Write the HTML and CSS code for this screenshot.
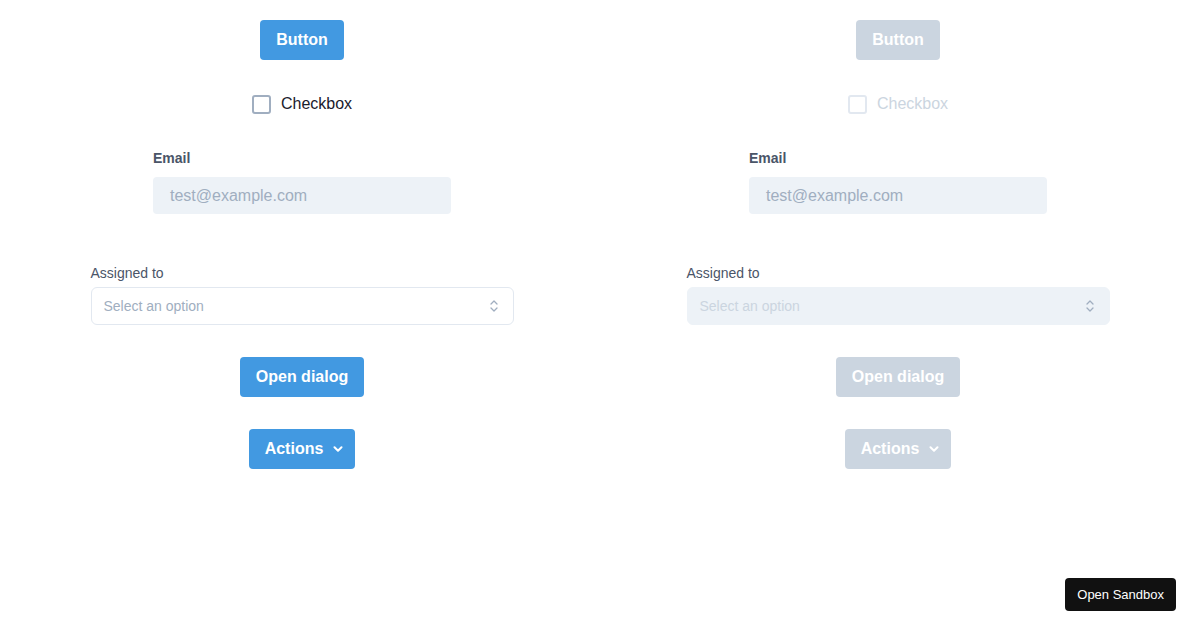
FILE: index.html
```html
<!DOCTYPE html>
<html lang="en">
<head>
  <meta charset="UTF-8">
  <meta name="viewport" content="width=device-width, initial-scale=1.0">
  <title>Components</title>
  <link rel="stylesheet" href="styles.css">
</head>
<body>
  <div class="grid">
    <div class="col">
      <button class="btn">Button</button>
      <label class="check">
        <span class="check-box"></span>
        <span>Checkbox</span>
      </label>
      <div class="field">
        <div class="field-label">Email</div>
        <div class="input">test@example.com</div>
      </div>
      <div class="select-field">
        <div class="select-label">Assigned to</div>
        <div class="select">
          <span>Select an option</span>
          <svg class="select-icon" width="10" height="16" viewBox="0 0 10 16" fill="none" stroke="currentColor" stroke-width="1.3" stroke-linecap="round" stroke-linejoin="round"><path d="M2 6l3-3 3 3"/><path d="M2 10l3 3 3-3"/></svg>
        </div>
      </div>
      <button class="btn btn-dialog">Open dialog</button>
      <button class="btn btn-actions">Actions
        <svg width="10" height="6" viewBox="0 0 10 6" fill="none" stroke="currentColor" stroke-width="2" stroke-linecap="round" stroke-linejoin="round"><path d="M1.5 1.2l3.5 3.5 3.5-3.5"/></svg>
      </button>
    </div>

    <div class="col disabled">
      <button class="btn" disabled>Button</button>
      <label class="check">
        <span class="check-box"></span>
        <span>Checkbox</span>
      </label>
      <div class="field">
        <div class="field-label">Email</div>
        <div class="input">test@example.com</div>
      </div>
      <div class="select-field">
        <div class="select-label">Assigned to</div>
        <div class="select">
          <span>Select an option</span>
          <svg class="select-icon" width="10" height="16" viewBox="0 0 10 16" fill="none" stroke="currentColor" stroke-width="1.3" stroke-linecap="round" stroke-linejoin="round"><path d="M2 6l3-3 3 3"/><path d="M2 10l3 3 3-3"/></svg>
        </div>
      </div>
      <button class="btn btn-dialog" disabled>Open dialog</button>
      <button class="btn btn-actions" disabled>Actions
        <svg width="10" height="6" viewBox="0 0 10 6" fill="none" stroke="currentColor" stroke-width="2" stroke-linecap="round" stroke-linejoin="round"><path d="M1.5 1.2l3.5 3.5 3.5-3.5"/></svg>
      </button>
    </div>
  </div>

  <button class="sandbox-btn">Open Sandbox</button>
</body>
</html>
```

FILE: styles.css
```css
body {
  margin: 0;
  font-family: 'Liberation Sans', Arial, sans-serif;
  color: #1a202c;
  background: #fff;
}
.grid {
  display: grid;
  grid-template-columns: 588px 588px;
  gap: 8px;
  padding: 20px 8px 0;
}
.col {
  display: flex;
  flex-direction: column;
  align-items: center;
}
.btn {
  height: 40px;
  padding: 0 16px;
  background: #4299e1;
  color: #fff;
  border: none;
  border-radius: 4px;
  font-family: inherit;
  font-size: 16px;
  font-weight: bold;
  cursor: pointer;
}
.btn:disabled {
  background: #cbd5e0;
  cursor: not-allowed;
}
.check {
  display: flex;
  align-items: center;
  gap: 10px;
  height: 24px;
  margin-top: 32px;
  font-size: 16px;
  color: #1a202c;
}
.check-box {
  width: 15px;
  height: 15px;
  border: 2px solid #a0aec0;
  border-radius: 3px;
}
.field {
  width: 298px;
  margin-top: 32px;
}
.field-label {
  font-size: 14px;
  font-weight: bold;
  color: #4a5568;
  line-height: 20px;
  margin-bottom: 9px;
}
.input {
  height: 37px;
  line-height: 37px;
  padding: 0 17px;
  background: #edf2f7;
  border-radius: 4px;
  font-size: 16px;
  color: #a0aec0;
}
.select-field {
  width: 423px;
  margin-top: 49px;
}
.select-label {
  font-size: 14px;
  color: #4a5568;
  line-height: 20px;
  margin-bottom: 4px;
}
.select {
  box-sizing: border-box;
  display: flex;
  align-items: center;
  justify-content: space-between;
  height: 38px;
  padding: 0 14px 0 12px;
  border: 1px solid #e2e8f0;
  border-radius: 6px;
  font-size: 14px;
  color: #a0aec0;
}
.select-icon {
  color: #a0aec0;
}
.btn-dialog {
  margin-top: 32px;
}
.btn-actions {
  margin-top: 32px;
  display: flex;
  align-items: center;
  gap: 10px;
  padding-right: 12px;
}
.disabled .check {
  color: #cbd5e0;
}
.disabled .check-box {
  border-color: #e2e8f0;
}
.disabled .select {
  background: #edf2f7;
  border-color: #edf2f7;
  color: #cbd5e0;
}
.disabled .select-icon {
  color: #a0aec0;
}
.sandbox-btn {
  position: fixed;
  right: 24px;
  bottom: 19px;
  height: 33px;
  padding: 0 12px;
  background: #111;
  color: #fff;
  border: none;
  border-radius: 4px;
  font-family: 'Liberation Sans', Arial, sans-serif;
  font-size: 13px;
}
```
